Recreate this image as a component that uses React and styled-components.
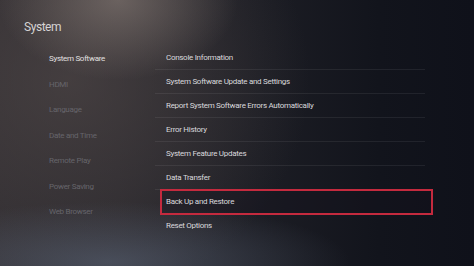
import React from "react";
import styled, { createGlobalStyle } from "styled-components";

const Global = createGlobalStyle`
  html, body { margin: 0; padding: 0; background: #14151c; }
  #root { width: 474px; height: 266px; }
`;

const Screen = styled.div`
  position: relative;
  width: 474px;
  height: 266px;
  overflow: hidden;
  font-family: Roboto, "Noto Sans", sans-serif;
  background:
    radial-gradient(ellipse 120px 80px at 118px 0px, rgba(140, 128, 122, 0.6), rgba(140, 128, 122, 0) 100%),
    radial-gradient(ellipse 240px 60px at 110px 262px, rgba(90, 100, 118, 0.6), rgba(90, 100, 118, 0) 100%),
    radial-gradient(ellipse 240px 220px at 70px 80px, rgba(80, 72, 72, 0.65), rgba(80, 72, 72, 0) 100%),
    linear-gradient(90deg, #302d31 0%, #2a282d 25%, #1c1d24 55%, #12141c 80%, #0f111a 100%);
`;

const Title = styled.h1`
  margin: 0;
  padding: 20px 0 0 24px;
  height: 46px;
  box-sizing: border-box;
  font-size: 12px;
  line-height: 15px;
  font-weight: 400;
  color: #d6d4d4;
  letter-spacing: -0.45px;
`;

const Body = styled.div`
  display: flex;
  flex-direction: row;
`;

const Nav = styled.ul`
  list-style: none;
  margin: 0;
  padding: 0 0 0 49px;
  width: 112px;
  box-sizing: content-box;
`;

const NavItem = styled.li`
  height: 25.5px;
  display: flex;
  align-items: center;
  font-size: 8px;
  letter-spacing: -0.3px;
  color: ${(p) => (p.$active ? "#e2e0e0" : "#66656b")};
  white-space: nowrap;
`;

const List = styled.ul`
  list-style: none;
  margin: 0;
  padding: 0;
  width: 271px;
`;

const Row = styled.li`
  height: 24px;
  display: flex;
  align-items: center;
  font-size: 8px;
  letter-spacing: -0.3px;
  color: #d9d8dc;
  white-space: nowrap;
  box-sizing: border-box;
  border-bottom: 1px solid ${(p) => (p.$last ? "transparent" : "rgba(255,255,255,0.07)")};
  margin-left: ${(p) => (p.$selected ? "0" : "-6px")};
  margin-right: ${(p) => (p.$selected ? "0" : "7px")};
  padding-left: ${(p) => (p.$selected ? "5px" : "11px")};
  outline: ${(p) => (p.$selected ? "2px solid #c42a3e" : "none")};
  outline-offset: -1px;
  background: ${(p) => (p.$selected ? "rgba(20,18,28,0.35)" : "transparent")};
`;

const navItems = [
  "System Software",
  "HDMI",
  "Language",
  "Date and Time",
  "Remote Play",
  "Power Saving",
  "Web Browser",
];

const rows = [
  "Console Information",
  "System Software Update and Settings",
  "Report System Software Errors Automatically",
  "Error History",
  "System Feature Updates",
  "Data Transfer",
  "Back Up and Restore",
  "Reset Options",
];

export default function App() {
  return (
    <>
      <Global />
      <Screen>
        <Title>System</Title>
        <Body>
          <Nav>
            {navItems.map((t, i) => (
              <NavItem key={t} $active={i === 0}>
                {t}
              </NavItem>
            ))}
          </Nav>
          <List>
            {rows.map((t, i) => (
              <Row key={t} $selected={t === "Back Up and Restore"} $last={i === rows.length - 1}>
                {t}
              </Row>
            ))}
          </List>
        </Body>
      </Screen>
    </>
  );
}
